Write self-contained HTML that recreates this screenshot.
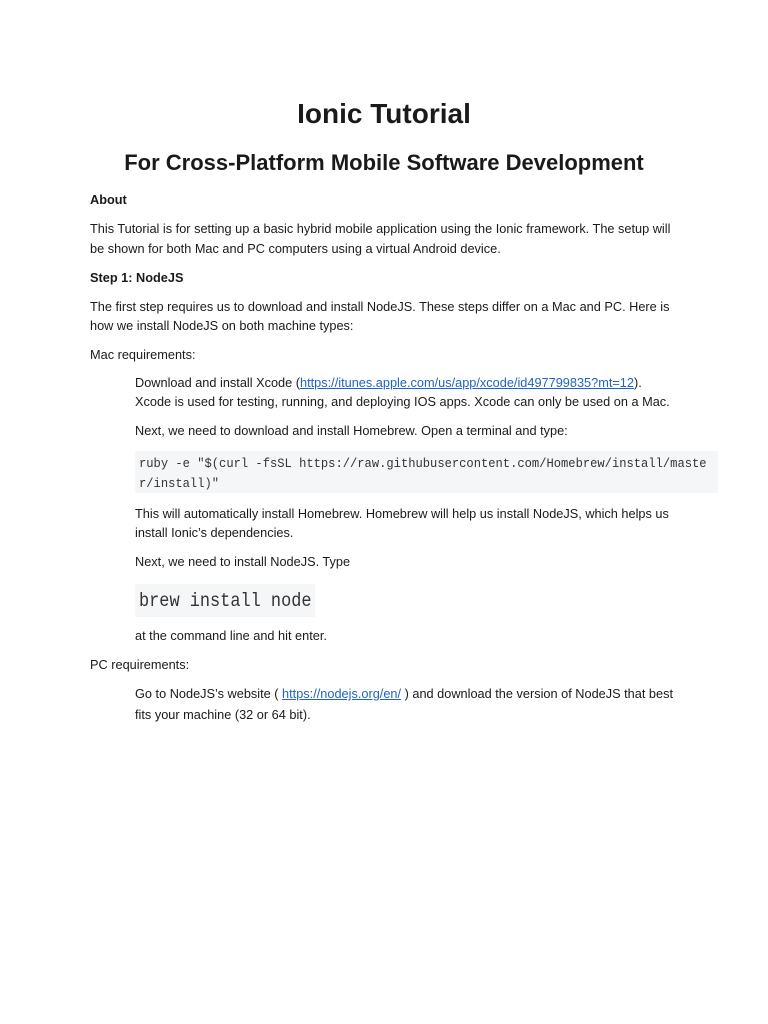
<!DOCTYPE html>
<html><head><meta charset="utf-8"><style>
html,body{margin:0;padding:0;background:#fff;width:768px;height:1024px;overflow:hidden}
body{position:relative;font-family:"Liberation Sans",sans-serif;color:#1a1a1a}
.l{position:absolute;white-space:nowrap;font-size:13px;line-height:16px;transform:scaleX(0.98);transform-origin:left center}
.b{font-weight:bold}
a{color:#1f63c6;text-decoration:underline}
.c{position:absolute;background:#f4f6f8}
.m{position:absolute;white-space:nowrap;font-family:"Liberation Mono",monospace;color:#333}
.t{position:absolute;left:0;width:768px;text-align:center;font-weight:bold;white-space:nowrap}
</style></head><body>
<div class="t" style="top:96px;font-size:28px;line-height:36px">Ionic Tutorial</div>
<div class="t" style="top:149px;font-size:22px;line-height:28px">For Cross-Platform Mobile Software Development</div>
<div class="l b" style="left:90px;top:192px">About</div>
<div class="l" style="left:90px;top:221px">This Tutorial is for setting up a basic hybrid mobile application using the Ionic framework. The setup will</div>
<div class="l" style="left:90px;top:241px">be shown for both Mac and PC computers using a virtual Android device.</div>
<div class="l b" style="left:90px;top:270px">Step 1: NodeJS</div>
<div class="l" style="left:90px;top:299px">The first step requires us to download and install NodeJS. These steps differ on a Mac and PC. Here is</div>
<div class="l" style="left:90px;top:318px">how we install NodeJS on both machine types:</div>
<div class="l" style="left:90px;top:347px">Mac requirements:</div>
<div class="l" style="left:135px;top:375px">Download and install Xcode (<a>https://itunes.apple.com/us/app/xcode/id497799835?mt=12</a>).</div>
<div class="l" style="left:135px;top:394px">Xcode is used for testing, running, and deploying IOS apps. Xcode can only be used on a Mac.</div>
<div class="l" style="left:135px;top:423px">Next, we need to download and install Homebrew. Open a terminal and type:</div>
<div class="c" style="left:135px;top:451px;width:583px;height:42px"></div>
<div class="m" style="left:139px;top:454px;font-size:12.5px;line-height:20px;transform:scaleX(0.97);transform-origin:left">ruby -e "$(curl -fsSL https://raw.githubusercontent.com/Homebrew/install/maste<br>r/install)"</div>
<div class="l" style="left:135px;top:506px">This will automatically install Homebrew. Homebrew will help us install NodeJS, which helps us</div>
<div class="l" style="left:135px;top:525px">install Ionic’s dependencies.</div>
<div class="l" style="left:135px;top:554px">Next, we need to install NodeJS. Type</div>
<div class="c" style="left:135px;top:584px;width:180px;height:33px"></div>
<div class="m" style="left:139px;top:589px;font-size:19px;line-height:24px;transform:scaleX(0.89);transform-origin:left">brew install node</div>
<div class="l" style="left:135px;top:628px">at the command line and hit enter.</div>
<div class="l" style="left:90px;top:657px">PC requirements:</div>
<div class="l" style="left:135px;top:686px">Go to NodeJS’s website ( <a>https://nodejs.org/en/</a> ) and download the version of NodeJS that best</div>
<div class="l" style="left:135px;top:707px">fits your machine (32 or 64 bit).</div>
</body></html>
